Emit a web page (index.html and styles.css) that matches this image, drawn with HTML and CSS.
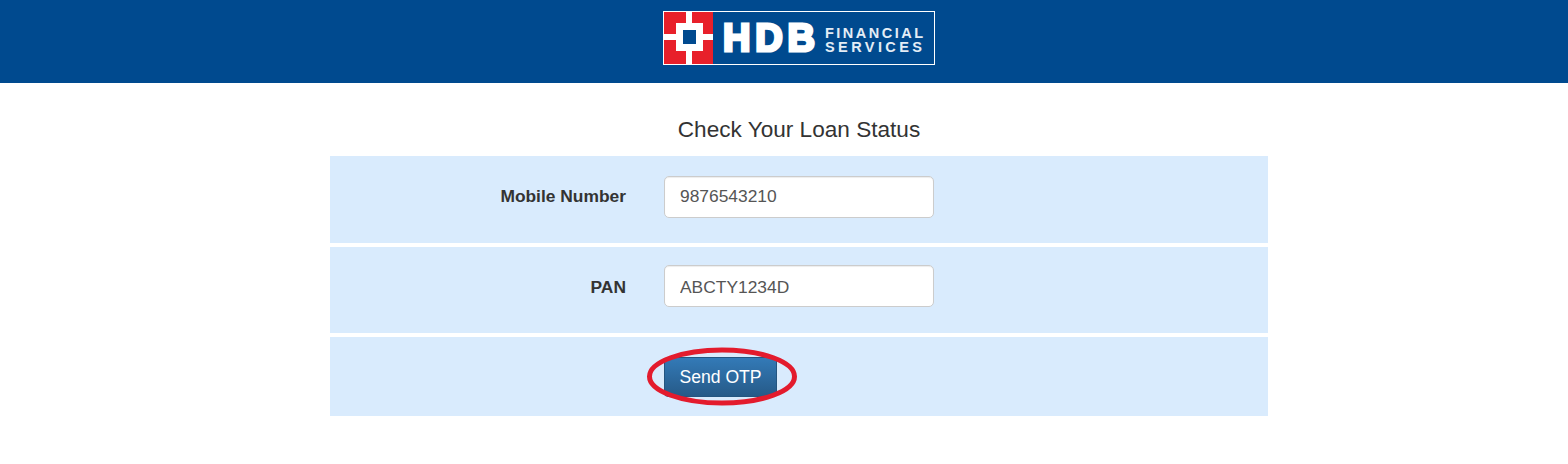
FILE: index.html
```html
<!DOCTYPE html>
<html lang="en">
<head>
  <meta charset="UTF-8">
  <meta name="viewport" content="width=device-width, initial-scale=1.0">
  <title>HDB Financial Services - Loan Status</title>
  <link rel="stylesheet" href="styles.css">
</head>
<body>
  <header>
    <div class="wrap logo-wrap">
      <svg class="logo" width="272" height="54" viewBox="0 0 272 54" role="img" aria-label="HDB Financial Services">
        <rect width="272" height="54" fill="#fff"/>
        <rect x="1" y="1" width="270" height="52" fill="#004a8f"/>
        <rect x="1" y="1" width="49" height="52" fill="#e8202a"/>
        <rect x="23" y="1" width="6" height="52" fill="#fff"/>
        <rect x="1" y="23" width="49" height="6" fill="#fff"/>
        <rect x="13" y="12" width="27" height="28" fill="#fff"/>
        <rect x="20" y="19" width="13" height="14" fill="#004a8f"/>
        <text class="logo-hdb" x="60" y="40" textLength="92" lengthAdjust="spacing">HDB</text>
        <text class="logo-small" x="162" y="27" textLength="98" lengthAdjust="spacing">FINANCIAL</text>
        <text class="logo-small" x="162" y="41" textLength="97" lengthAdjust="spacing">SERVICES</text>
      </svg>
    </div>
  </header>

  <main class="wrap">
    <h3>Check Your Loan Status</h3>
    <form>
      <div class="row row-tall">
        <label for="mobile">Mobile Number</label>
        <input type="text" id="mobile" value="9876543210">
      </div>
      <div class="row row-tall">
        <label for="pan">PAN</label>
        <input type="text" id="pan" value="ABCTY1234D">
      </div>
      <div class="row row-btn">
        <span></span>
        <div class="btn-holder">
          <button type="button">Send OTP</button>
          <svg class="circle" width="152" height="60" viewBox="0 0 152 60" aria-hidden="true">
            <ellipse cx="76" cy="29.5" rx="72.5" ry="26.5" fill="none" stroke="#e31b2d" stroke-width="5"/>
          </svg>
        </div>
      </div>
    </form>
  </main>
</body>
</html>
```

FILE: styles.css
```css
* {
  box-sizing: border-box;
}
body {
  margin: 0;
  background: #fff;
  color: #333;
  font-family: "Liberation Sans", Arial, sans-serif;
}
.wrap {
  width: 938px;
  margin-left: 330px;
}
header {
  background: #004a8f;
  height: 83px;
  padding-top: 11px;
}
.logo-wrap {
  display: flex;
  justify-content: center;
}
.logo {
  display: block;
}
.logo-hdb {
  font-family: "Liberation Sans", Arial, sans-serif;
  font-size: 38px;
  font-weight: bold;
  fill: #fff;
  stroke: #fff;
  stroke-width: 3px;
}
.logo-small {
  font-family: "Liberation Sans", Arial, sans-serif;
  font-size: 14.5px;
  font-weight: bold;
  fill: #e4edf6;
}
h3 {
  margin: 0;
  height: 73px;
  padding-top: 34px;
  font-size: 22.6px;
  font-weight: normal;
  line-height: 26px;
  text-align: center;
}
.row {
  display: grid;
  grid-template-columns: 296px 270px;
  column-gap: 38px;
  background: #d9ebfd;
  margin-bottom: 4px;
  padding-top: 19.5px;
}
.row-tall {
  height: 87px;
}
.row-tall + .row-tall {
  height: 86px;
  padding-top: 18px;
}
.row-tall + .row-tall label {
  line-height: 44px;
}
.row-tall + .row-tall input {
  padding-top: 2px;
}
.row-btn {
  height: 79px;
  padding-top: 20px;
  margin-bottom: 0;
}
label {
  font-size: 17.4px;
  font-weight: bold;
  text-align: right;
  line-height: 40px;
}
input {
  width: 270px;
  height: 42px;
  padding: 0 15px;
  border: 1px solid #ccc;
  border-radius: 5px;
  background: #fff;
  color: #555;
  font-family: inherit;
  font-size: 17.4px;
  box-shadow: inset 0 1px 1px rgba(0,0,0,0.075);
}
.btn-holder {
  position: relative;
}
button {
  display: block;
  width: 113px;
  height: 40px;
  padding: 0;
  border: 1px solid #245580;
  border-radius: 4px;
  background: linear-gradient(to bottom, #337ab7, #265a88);
  color: #fff;
  font-family: inherit;
  font-size: 17.6px;
}
.circle {
  position: absolute;
  left: -18px;
  top: -10px;
  pointer-events: none;
}
```
